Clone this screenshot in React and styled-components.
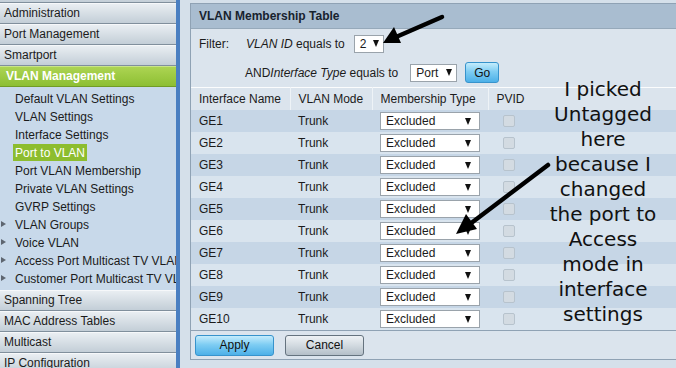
import React from "react";
import styled, { createGlobalStyle } from "styled-components";

const GlobalStyle = createGlobalStyle`
  body {
    margin: 0;
    font-family: "Liberation Sans", Arial, sans-serif;
    color: #1b1b1b;
  }
`;

const topMenu = ["Administration", "Port Management", "Smartport"];
const subMenu = [
  { label: "Default VLAN Settings" },
  { label: "VLAN Settings" },
  { label: "Interface Settings" },
  { label: "Port to VLAN", selected: true },
  { label: "Port VLAN Membership" },
  { label: "Private VLAN Settings" },
  { label: "GVRP Settings" },
  { label: "VLAN Groups", expandable: true },
  { label: "Voice VLAN", expandable: true },
  { label: "Access Port Multicast TV VLAN", expandable: true },
  { label: "Customer Port Multicast TV VLAN", expandable: true },
];
const bottomMenu = ["Spanning Tree", "MAC Address Tables", "Multicast", "IP Configuration"];
const ports = ["GE1", "GE2", "GE3", "GE4", "GE5", "GE6", "GE7", "GE8", "GE9", "GE10"];
const noteLines = [
  "I picked",
  "Untagged",
  "here",
  "because I",
  "changed",
  "the port to",
  "Access",
  "mode in",
  "interface",
  "settings",
];

const App = () => {
  return (
    <Page>
      <GlobalStyle />
      <Sidebar>
        <MenuBar $hidden>Status and Statistics</MenuBar>
        {topMenu.map((m) => (
          <MenuBar key={m}>{m}</MenuBar>
        ))}
        <MenuBar $active>VLAN Management</MenuBar>
        <SubList>
          {subMenu.map((s) => (
            <SubItem key={s.label} $expandable={s.expandable}>
              <SubLabel $selected={s.selected}>{s.label}</SubLabel>
            </SubItem>
          ))}
        </SubList>
        {bottomMenu.map((m) => (
          <MenuBar key={m}>{m}</MenuBar>
        ))}
      </Sidebar>

      <Main>
        <Panel>
          <PanelHeader>VLAN Membership Table</PanelHeader>
          <FilterRow $indent={8}>
            <FilterLabel>Filter:</FilterLabel>
            <em>VLAN ID</em>&nbsp;equals to
            <SelectBox $width={30} $gap={7} $margin={9}>
              2<Caret />
            </SelectBox>
          </FilterRow>
          <FilterRow $indent={54}>
            AND<em>Interface Type</em>&nbsp;equals to
            <SelectBox $width={47} $gap={8} $margin={12}>
              Port<Caret />
            </SelectBox>
            <BlueButton $width={34}>Go</BlueButton>
          </FilterRow>

          <Table>
            <colgroup>
              <col style={{ width: 99 }} />
              <col style={{ width: 82 }} />
              <col style={{ width: 116 }} />
              <col />
            </colgroup>
            <thead>
              <tr>
                <Th>Interface Name</Th>
                <Th>VLAN Mode</Th>
                <Th>Membership Type</Th>
                <Th>PVID</Th>
              </tr>
            </thead>
            <tbody>
              {ports.map((p, i) => (
                <Row key={p} $dark={i % 2 === 0}>
                  <Td>{p}</Td>
                  <Td>Trunk</Td>
                  <Td>
                    <SelectBox $width={100} $gap={0} $spread>
                      Excluded<Caret />
                    </SelectBox>
                  </Td>
                  <Td $pad={15}>
                    <Check />
                  </Td>
                </Row>
              ))}
            </tbody>
          </Table>

          <ButtonBar>
            <BlueButton $width={79}>Apply</BlueButton>
            <GreyButton>Cancel</GreyButton>
          </ButtonBar>
        </Panel>
      </Main>

      <Note>
        {noteLines.map((l) => (
          <NoteLine key={l}>{l}</NoteLine>
        ))}
      </Note>

      <Arrows viewBox="0 0 676 368">
        <line x1="442" y1="17" x2="396" y2="37" stroke="#000" strokeWidth="4.5" strokeLinecap="round" />
        <polygon points="383,43 401,43 394,27" fill="#000" />
        <line x1="548" y1="165" x2="470" y2="224" stroke="#000" strokeWidth="4.5" strokeLinecap="round" />
        <polygon points="456,234 477,229 466,214" fill="#000" />
      </Arrows>
    </Page>
  );
};

export default App;

const Page = styled.div`
  position: relative;
  display: flex;
  width: 676px;
  height: 368px;
  overflow: hidden;
  background: #d5e0ea;
`;

const Sidebar = styled.nav`
  width: 180px;
  flex-shrink: 0;
  box-sizing: border-box;
  border-right: 4px solid #4a7fc1;
  background: #c8d9ea;
  display: flex;
  flex-direction: column;
  overflow: hidden;
  font-size: 12px;
`;

const MenuBar = styled.div`
  flex-shrink: 0;
  height: 21px;
  box-sizing: border-box;
  padding-left: ${(p) => (p.$active ? "6px" : "4px")};
  line-height: 19px;
  white-space: nowrap;
  margin-top: ${(p) => (p.$hidden ? "-18px" : "0")};
  border-top: 1px solid ${(p) => (p.$active ? "#c8e489" : "#f6f8fa")};
  border-bottom: 1px solid ${(p) => (p.$active ? "#719c25" : "#808f9c")};
  background: ${(p) =>
    p.$active
      ? "linear-gradient(#acd452, #8dbf33)"
      : "linear-gradient(#e9eef2, #c3ced7)"};
  color: ${(p) => (p.$active ? "#fff" : "#1b1b1b")};
  font-weight: ${(p) => (p.$active ? "bold" : "normal")};
  font-size: 12px;
`;

const SubList = styled.div`
  flex-shrink: 0;
  padding: 2px 0 3px;
`;

const SubItem = styled.div`
  height: 18px;
  display: flex;
  align-items: center;
  white-space: nowrap;
  font-size: 12px;

  &::before {
    content: "";
    flex-shrink: 0;
    width: 0;
    height: 0;
    margin: 0 9px 0 1px;
    border-top: 3.5px solid transparent;
    border-bottom: 3.5px solid transparent;
    border-left: 5px solid ${(p) => (p.$expandable ? "#5e6670" : "transparent")};
  }
`;

const SubLabel = styled.span`
  padding: 2px 2px 1px;
  margin-left: -2px;
  background: ${(p) => (p.$selected ? "#8dbd2f" : "transparent")};
  color: ${(p) => (p.$selected ? "#fff" : "#1b1b1b")};
`;

const Main = styled.main`
  flex: 1;
  padding: 3px 0 0 10px;
  overflow: hidden;
`;

const Panel = styled.section`
  width: 520px;
  border: 1px solid #8fa2b4;
  border-right: none;
  background: #dbe4ed;
  font-size: 12px;
`;

const PanelHeader = styled.h2`
  margin: 0;
  height: 24px;
  line-height: 24px;
  padding-left: 8px;
  font-size: 12px;
  font-weight: bold;
  color: #17222e;
  background: #a9bdd0;
  border-bottom: 1px solid #96a9ba;
`;

const FilterRow = styled.div`
  height: 29px;
  display: flex;
  align-items: center;
  padding-left: ${(p) => p.$indent}px;
  white-space: nowrap;
`;

const FilterLabel = styled.span`
  width: 47px;
`;

const SelectBox = styled.div`
  width: ${(p) => p.$width}px;
  height: 18px;
  box-sizing: border-box;
  margin-left: ${(p) => p.$margin || 0}px;
  padding: 0 ${(p) => (p.$spread ? "8px" : "0")} 0 5px;
  display: flex;
  align-items: center;
  justify-content: ${(p) => (p.$spread ? "space-between" : "flex-start")};
  gap: ${(p) => p.$gap}px;
  background: #fff;
  border: 1px solid #9aa3ab;
  font-size: 12px;
`;

const Caret = styled.span`
  width: 0;
  height: 0;
  border-left: 3px solid transparent;
  border-right: 3px solid transparent;
  border-top: 7px solid #111;
`;

const BlueButton = styled.button`
  width: ${(p) => p.$width}px;
  height: 21px;
  margin-left: ${(p) => (p.$width < 50 ? "8px" : "0")};
  padding: 0;
  border: 1px solid #3793cc;
  border-radius: 3px;
  background: linear-gradient(#c4ecfc 0%, #7fcdf3 45%, #4cb0e8 100%);
  font-family: inherit;
  font-size: 12px;
  color: #111;
`;

const GreyButton = styled(BlueButton)`
  width: 79px;
  border-color: #65737f;
  background: linear-gradient(#eef2f5 0%, #d2dae0 50%, #b4bfc8 100%);
`;

const Table = styled.table`
  width: 100%;
  border-collapse: collapse;
  table-layout: fixed;
  border-top: 1px solid #fbfcfd;
  border-bottom: 1px solid #8fa2b4;
`;

const Th = styled.th`
  height: 22px;
  padding: 0 8px;
  text-align: left;
  font-weight: normal;
  font-size: 12px;
  white-space: nowrap;
  border-left: 1px solid #eef3f7;
  &:first-child {
    border-left: none;
  }
`;

const Row = styled.tr`
  background: ${(p) => (p.$dark ? "#c6d6e6" : "#d9e4ee")};
`;

const Td = styled.td`
  height: 22px;
  padding: 0 0 0 ${(p) => p.$pad || 8}px;
  white-space: nowrap;
`;

const Check = styled.div`
  width: 12px;
  height: 12px;
  box-sizing: border-box;
  border: 1px solid #b7c3cd;
  border-radius: 2px;
  background: #d3dbe2;
`;

const ButtonBar = styled.div`
  height: 28px;
  display: flex;
  align-items: center;
  gap: 11px;
  padding-left: 4px;
`;

const Note = styled.div`
  position: absolute;
  left: 518px;
  top: 77px;
  width: 170px;
  text-align: center;
  font-family: "DejaVu Sans", Verdana, sans-serif;
  font-size: 20px;
  line-height: 25px;
  color: #111;
`;

const NoteLine = styled.div`
  white-space: nowrap;
`;

const Arrows = styled.svg`
  position: absolute;
  left: 0;
  top: 0;
  width: 676px;
  height: 368px;
  pointer-events: none;
`;
